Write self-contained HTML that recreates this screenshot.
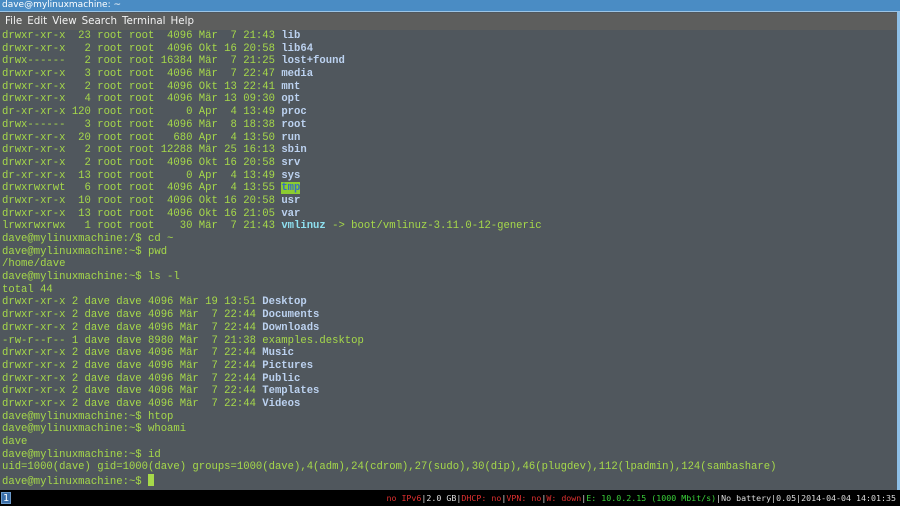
<!DOCTYPE html>
<html><head><meta charset="utf-8"><style>
html,body{margin:0;padding:0;width:900px;height:506px;overflow:hidden;background:#50575d;}
#title{position:absolute;left:0;top:0;width:900px;height:12px;background:#4a8cc4;border-bottom:1px solid #9cc4e4;font:9px "DejaVu Sans",sans-serif;color:#fff;line-height:11px;padding-left:2px;box-sizing:border-box;}
#menu{position:absolute;left:0;top:13px;width:900px;height:17px;background:#5d5e5d;font:10.3px "DejaVu Sans","Liberation Sans",sans-serif;color:#f2f2f2;line-height:16px;}
#menu span{margin-left:5px;margin-right:0}
#term{position:absolute;left:2px;top:30px;width:895px;height:459px;background:#50575d;}
pre{margin:0;font-family:"Liberation Mono","DejaVu Sans Mono",monospace;font-size:10.58px;line-height:12.69px;color:#a6d94a;letter-spacing:0;}
.d{color:#bcd2f0;font-weight:bold}
.c{color:#8ee0f0;font-weight:bold}
.t{color:#3a6ec0;background:#8bcc30;font-weight:bold}
.cur{display:inline-block;width:6px;height:12px;background:#a6d94a;vertical-align:-2px}
#rb{position:absolute;left:897px;top:12px;width:3px;height:478px;background:#8ec0e8}
#status{position:absolute;left:0;top:490px;width:900px;height:16px;background:#000;font-family:"DejaVu Sans Mono","Liberation Mono",monospace;font-size:8.3px;line-height:16px;color:#ddd;}
#ws{position:absolute;left:1px;top:2px;width:10px;height:12px;background:#3a6ea8;color:#fff;font:10px "DejaVu Sans Mono",monospace;line-height:12px;text-align:center;border:1px solid #6a98c8;box-sizing:border-box}
#sr{position:absolute;right:4px;top:0;white-space:pre}
.r{color:#e03030}.g{color:#3ad03a}
</style></head><body>
<div id="title">dave@mylinuxmachine: ~</div>
<div id="menu"><span>File</span><span>Edit</span><span>View</span><span>Search</span><span>Terminal</span><span>Help</span></div>
<div id="term"><pre>drwxr-xr-x  23 root root  4096 Mär  7 21:43 <span class="d">lib</span>
drwxr-xr-x   2 root root  4096 Okt 16 20:58 <span class="d">lib64</span>
drwx------   2 root root 16384 Mär  7 21:25 <span class="d">lost+found</span>
drwxr-xr-x   3 root root  4096 Mär  7 22:47 <span class="d">media</span>
drwxr-xr-x   2 root root  4096 Okt 13 22:41 <span class="d">mnt</span>
drwxr-xr-x   4 root root  4096 Mär 13 09:30 <span class="d">opt</span>
dr-xr-xr-x 120 root root     0 Apr  4 13:49 <span class="d">proc</span>
drwx------   3 root root  4096 Mär  8 18:38 <span class="d">root</span>
drwxr-xr-x  20 root root   680 Apr  4 13:50 <span class="d">run</span>
drwxr-xr-x   2 root root 12288 Mär 25 16:13 <span class="d">sbin</span>
drwxr-xr-x   2 root root  4096 Okt 16 20:58 <span class="d">srv</span>
dr-xr-xr-x  13 root root     0 Apr  4 13:49 <span class="d">sys</span>
drwxrwxrwt   6 root root  4096 Apr  4 13:55 <span class="t">tmp</span>
drwxr-xr-x  10 root root  4096 Okt 16 20:58 <span class="d">usr</span>
drwxr-xr-x  13 root root  4096 Okt 16 21:05 <span class="d">var</span>
lrwxrwxrwx   1 root root    30 Mär  7 21:43 <span class="c">vmlinuz</span> -&gt; boot/vmlinuz-3.11.0-12-generic
dave@mylinuxmachine:/$ cd ~
dave@mylinuxmachine:~$ pwd
/home/dave
dave@mylinuxmachine:~$ ls -l
total 44
drwxr-xr-x 2 dave dave 4096 Mär 19 13:51 <span class="d">Desktop</span>
drwxr-xr-x 2 dave dave 4096 Mär  7 22:44 <span class="d">Documents</span>
drwxr-xr-x 2 dave dave 4096 Mär  7 22:44 <span class="d">Downloads</span>
-rw-r--r-- 1 dave dave 8980 Mär  7 21:38 examples.desktop
drwxr-xr-x 2 dave dave 4096 Mär  7 22:44 <span class="d">Music</span>
drwxr-xr-x 2 dave dave 4096 Mär  7 22:44 <span class="d">Pictures</span>
drwxr-xr-x 2 dave dave 4096 Mär  7 22:44 <span class="d">Public</span>
drwxr-xr-x 2 dave dave 4096 Mär  7 22:44 <span class="d">Templates</span>
drwxr-xr-x 2 dave dave 4096 Mär  7 22:44 <span class="d">Videos</span>
dave@mylinuxmachine:~$ htop
dave@mylinuxmachine:~$ whoami
dave
dave@mylinuxmachine:~$ id
uid=1000(dave) gid=1000(dave) groups=1000(dave),4(adm),24(cdrom),27(sudo),30(dip),46(plugdev),112(lpadmin),124(sambashare)
dave@mylinuxmachine:~$ <span class="cur"></span></pre></div>
<div id="rb"></div>
<div id="status"><div id="ws">1</div><div id="sr"><span class="r">no IPv6</span>|2.0 GB|<span class="r">DHCP: no</span>|<span class="r">VPN: no</span>|<span class="r">W: down</span>|<span class="g">E: 10.0.2.15 (1000 Mbit/s)</span>|No battery|0.05|2014-04-04 14:01:35</div></div>
</body></html>
